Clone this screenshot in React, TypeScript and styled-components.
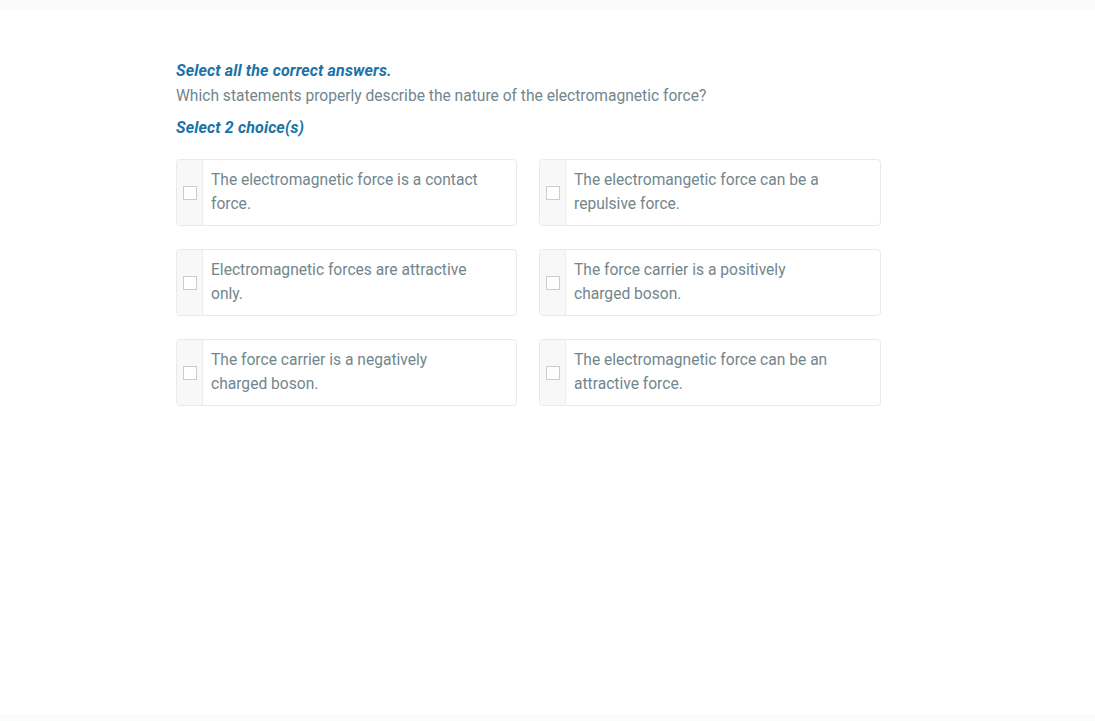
import styled, { createGlobalStyle } from "styled-components";

const GlobalStyle = createGlobalStyle`
  html, body {
    margin: 0;
    padding: 0;
    background: #fafcfc;
  }
  body {
    font-family: Roboto, "Noto Sans", Arial, sans-serif;
  }
`;

const Page = styled.div`
  background: #ffffff;
  margin: 10px 0 7px;
  min-height: 704px;
  box-sizing: border-box;
  padding: 51px 0 0 176px;
`;

const Instruction = styled.div<{ $gap?: number }>`
  color: #1a73a6;
  font-weight: 700;
  font-style: italic;
  font-size: 16px;
  letter-spacing: 0.15px;
  line-height: 20px;
  margin-top: ${p => p.$gap ?? 0}px;
`;

const Question = styled.div`
  color: #72868d;
  font-size: 15.6px;
  line-height: 22px;
  margin-top: 4px;
`;

const Choices = styled.div`
  display: grid;
  grid-template-columns: 341px 342px;
  column-gap: 22px;
  row-gap: 23px;
  margin-top: 21px;
`;

const Choice = styled.label`
  display: flex;
  border: 1px solid #e9e9e9;
  border-radius: 4px;
  background: #ffffff;
  overflow: hidden;
  cursor: pointer;
`;

const BoxCell = styled.div`
  width: 25px;
  flex: none;
  background: #f8f8f8;
  border-right: 1px solid #ededed;
  display: flex;
  align-items: center;
  justify-content: center;
`;

const Box = styled.span`
  width: 12px;
  height: 12px;
  border: 1px solid #cccccc;
  background: #ffffff;
  display: block;
`;

const Text = styled.div`
  color: #72868d;
  font-size: 15.6px;
  line-height: 24px;
  padding: 8px 10px 9px 8px;

  & > span {
    display: block;
    white-space: nowrap;
  }
`;

const options = [
  ["The electromagnetic force is a contact", "force."],
  ["The electromangetic force can be a", "repulsive force."],
  ["Electromagnetic forces are attractive", "only."],
  ["The force carrier is a positively", "charged boson."],
  ["The force carrier is a negatively", "charged boson."],
  ["The electromagnetic force can be an", "attractive force."],
];

const App = () => {
  return (
    <>
      <GlobalStyle />
      <Page>
        <Instruction>Select all the correct answers.</Instruction>
        <Question>Which statements properly describe the nature of the electromagnetic force?</Question>
        <Instruction $gap={11}>Select 2 choice(s)</Instruction>
        <Choices>
          {options.map(lines => (
            <Choice key={lines[0]}>
              <BoxCell>
                <Box />
              </BoxCell>
              <Text>
                {lines.map(line => (
                  <span key={line}>{line}</span>
                ))}
              </Text>
            </Choice>
          ))}
        </Choices>
      </Page>
    </>
  );
};

export default App;
